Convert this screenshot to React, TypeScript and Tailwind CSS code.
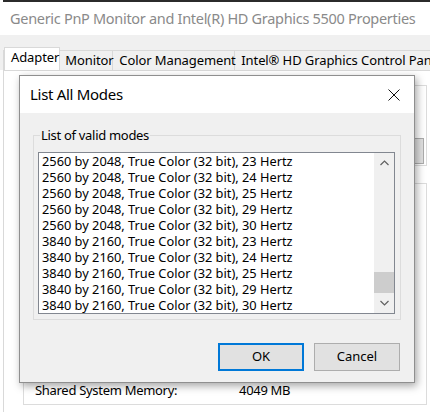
import React from "react";

const modes = [
  "2560 by 2048, True Color (32 bit), 23 Hertz",
  "2560 by 2048, True Color (32 bit), 24 Hertz",
  "2560 by 2048, True Color (32 bit), 25 Hertz",
  "2560 by 2048, True Color (32 bit), 29 Hertz",
  "2560 by 2048, True Color (32 bit), 30 Hertz",
  "3840 by 2160, True Color (32 bit), 23 Hertz",
  "3840 by 2160, True Color (32 bit), 24 Hertz",
  "3840 by 2160, True Color (32 bit), 25 Hertz",
  "3840 by 2160, True Color (32 bit), 29 Hertz",
  "3840 by 2160, True Color (32 bit), 30 Hertz",
];

const infoRows: [string, string][] = [
  ["Chip Type:", "Intel(R) HD Graphics Family"],
  ["DAC Type:", "Internal"],
  ["Adapter String:", "Intel(R) HD Graphics 5500"],
  ["Bios Information:", "Intel Video BIOS"],
  ["Total Available Graphics Memory:", "4177 MB"],
  ["Dedicated Video Memory:", "128 MB"],
  ["System Video Memory:", "0 MB"],
  ["Shared System Memory:", "4049 MB"],
];

function Chevron({ up }: { up?: boolean }) {
  return (
    <svg width="9" height="6" viewBox="0 0 9 6" className="block">
      <path
        d={up ? "M0.5 5 L4.5 1 L8.5 5" : "M0.5 1 L4.5 5 L8.5 1"}
        fill="none"
        stroke="#606060"
        strokeWidth="1.2"
      />
    </svg>
  );
}

export default function App() {
  return (
    <div className="relative w-[430px] h-[412px] overflow-hidden bg-white font-['Noto_Sans',sans-serif] text-black">
      {/* top dark edge */}
      <div className="h-[2px] ml-[3px] bg-[#2b2b2b]" />
      {/* title bar */}
      <div className="h-[33px] flex items-center pl-[10px] text-[14.5px] text-[#8a8a8a] whitespace-nowrap tracking-[-0.3px]">
        Generic PnP Monitor and Intel(R) HD Graphics 5500 Properties
      </div>
      {/* tab row */}
      <div className="bg-[#f0f0f0] h-[35px] flex items-end pl-[3px] whitespace-nowrap text-[13px] tracking-[-0.1px]">
        <div className="w-[5px] h-[20px] border-l border-[#d9d9d9]" />
        <div className="h-[23px] w-[59px] bg-white border border-b-0 border-[#d9d9d9] flex items-center pl-[6px] pb-[3px]">
          Adapter
        </div>
        <div className="h-[20px] w-[53px] border-t border-r border-[#d9d9d9] flex items-center pl-[5px]">
          Monitor
        </div>
        <div className="h-[20px] w-[122px] border-t border-r border-[#d9d9d9] flex items-center pl-[6px]">
          Color Management
        </div>
        <div className="h-[20px] w-[220px] shrink-0 border-t border-r border-[#d9d9d9] flex items-center pl-[6px]">
          Intel® HD Graphics Control Panel
        </div>
      </div>
      {/* tab pane */}
      <div className="ml-[3px] w-[440px] h-[342px] bg-white border-t border-l border-[#d9d9d9] flex flex-col pl-[19px] pt-[14px] text-[13px] tracking-[-0.3px] whitespace-nowrap">
        <div className="w-[404px] h-[81px] border border-[#dcdcdc] relative">
          <div className="absolute right-[2px] bottom-[1px] w-[84px] h-[26px] bg-[#e1e1e1] border border-[#adadad] flex items-center justify-center">
            Properties
          </div>
        </div>
        <div className="w-[404px] h-[222px] mt-[17px] border border-[#dcdcdc] flex flex-col justify-end pl-[11px] pb-[4px]">
          {infoRows.map(([k, v]) => (
            <div key={k} className="flex h-[18px] items-center">
              <span className="w-[204px]">{k}</span>
              <span>{v}</span>
            </div>
          ))}
        </div>
      </div>

      {/* List All Modes dialog (overlay) */}
      <div className="absolute left-[19px] top-[75px] w-[396px] h-[308px] border border-[#8f8f8f] bg-[#f0f0f0] shadow-[2px_3px_8px_rgba(0,0,0,0.35)] flex flex-col">
        <div className="h-[37px] bg-white flex items-center justify-between pl-[10px] pr-[14px] shrink-0">
          <span className="text-[15px] tracking-[-0.3px]">List All Modes</span>
          <svg width="12" height="12" viewBox="0 0 12 12">
            <path d="M0.5 0.5 L11.5 11.5 M11.5 0.5 L0.5 11.5" stroke="#111" strokeWidth="1" fill="none" />
          </svg>
        </div>
        <div className="flex flex-col pl-[13px] pr-[12px] pt-[22px]">
          {/* group box */}
          <div className="relative w-[368px] h-[185px] border border-[#dcdcdc] pt-[16px] pl-[4px]">
            <div className="absolute left-[6px] top-[-10px] bg-[#f0f0f0] px-[1px] text-[13px] leading-[18px] tracking-[-0.3px]">
              List of valid modes
            </div>
            <div className="w-[357px] h-[162px] border border-[#828790] bg-white flex">
              <div className="flex-1 flex flex-col pl-[3px] text-[12.8px] whitespace-nowrap">
                {modes.map((m) => (
                  <div key={m} className="h-[16px] leading-[16px]">
                    {m}
                  </div>
                ))}
              </div>
              <div className="w-[20px] bg-[#f0f0f0] flex flex-col">
                <div className="h-[20px] flex items-center justify-center">
                  <Chevron up />
                </div>
                <div className="flex-1 flex flex-col justify-end">
                  <div className="h-[21px] bg-[#cdcdcd]" />
                </div>
                <div className="h-[20px] flex items-center justify-center">
                  <Chevron />
                </div>
              </div>
            </div>
          </div>
          {/* buttons */}
          <div className="flex justify-end gap-[10px] mt-[23px] pr-[2px] text-[13px]">
            <div className="w-[86px] h-[28px] bg-[#e1e1e1] border-2 border-[#0078d7] flex items-center justify-center">
              OK
            </div>
            <div className="w-[86px] h-[28px] bg-[#e1e1e1] border border-[#adadad] flex items-center justify-center">
              Cancel
            </div>
          </div>
        </div>
      </div>
    </div>
  );
}
